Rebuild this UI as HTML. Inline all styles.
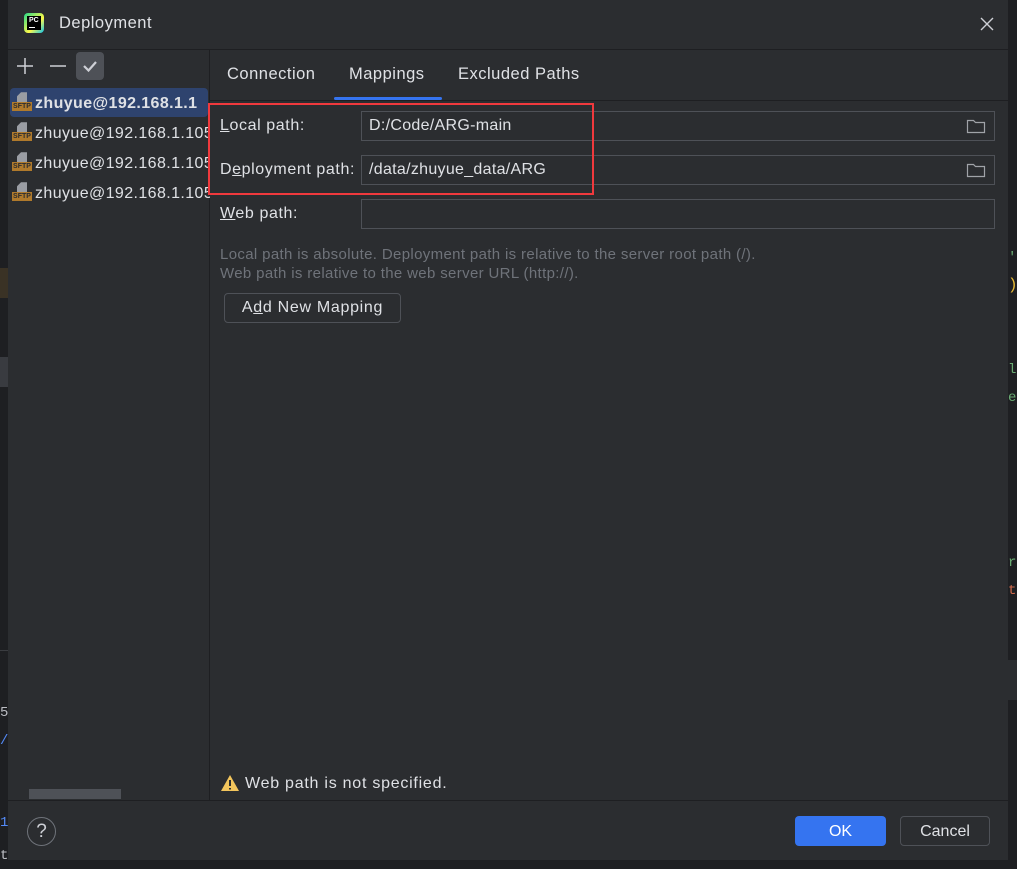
<!DOCTYPE html>
<html><head><meta charset="utf-8"><style>
*{box-sizing:border-box;margin:0;padding:0}
body{width:1017px;height:869px;background:#1e1f22;position:relative;overflow:hidden;font-family:"Liberation Sans",sans-serif;color:#dfe1e5;font-size:15px}
.abs{position:absolute}
#dlg{left:8px;top:0;width:1000px;height:860px;background:#2b2d30}
.u{text-decoration:underline}
.field{position:absolute;left:361px;width:634px;height:30px;border:1px solid #4e5157;background:#2b2d30;padding-left:7px;line-height:28px;font-size:16px;letter-spacing:0.3px}
.lbl{position:absolute;left:220px;font-size:16px;letter-spacing:0.6px}
.fold{position:absolute;right:8px;top:6px}
.item{position:absolute;left:10px;width:198px;height:28px;line-height:28px;font-size:16px;letter-spacing:0.4px;white-space:nowrap;overflow:hidden}
.sftp{display:inline-block;vertical-align:middle;width:20px;height:20px;position:relative;margin-right:3px;margin-top:-3px}
.tab{position:absolute;top:65px;font-size:16.5px;letter-spacing:0.5px}
</style></head><body>
<div class="abs" style="left:0;top:268px;width:8px;height:30px;background:#3a3225"></div>
<div class="abs" style="left:0;top:357px;width:8px;height:30px;background:#393b40"></div>
<div class="abs" style="left:0;top:650px;width:8px;height:1px;background:#3a3c40"></div>
<div class="abs" style="left:0;top:705px;font:14px 'Liberation Mono';color:#bcbec4">5</div>
<div class="abs" style="left:0;top:733px;font:14px 'Liberation Mono';color:#548af7">/</div>
<div class="abs" style="left:0;top:815px;font:14px 'Liberation Mono';color:#548af7">1</div>
<div class="abs" style="left:0;top:848px;font:14px 'Liberation Mono';color:#bcbec4">ta <span style="color:#2aacb8">0.00.00</span></div>
<div class="abs" style="left:1008px;top:250px;font:14px 'Liberation Mono';color:#6aab73">'</div>
<div class="abs" style="left:1008px;top:276px;font:16px 'Liberation Mono';color:#e8ba36">)</div>
<div class="abs" style="left:1008px;top:362px;font:14px 'Liberation Mono';color:#6aab73">l</div>
<div class="abs" style="left:1008px;top:390px;font:14px 'Liberation Mono';color:#6aab73">e</div>
<div class="abs" style="left:1008px;top:555px;font:14px 'Liberation Mono';color:#6aab73">r</div>
<div class="abs" style="left:1008px;top:583px;font:14px 'Liberation Mono';color:#cf6a4c">t</div>
<div class="abs" style="left:1008px;top:660px;width:9px;height:40px;background:#2b2d30"></div>

<div id="dlg" class="abs">
 <div class="abs" style="left:16px;top:13px;width:20px;height:20px;border-radius:4px;background:linear-gradient(135deg,#21d789,#fcf84a 60%,#07c3f2)"></div>
 <div class="abs" style="left:19px;top:16px;width:14px;height:14px;background:#000;color:#fff;font:bold 7px 'Liberation Sans';padding:1px 0 0 2px">PC<div style="width:6px;height:1px;background:#fff;margin-top:3px"></div></div>
 <div class="abs" style="left:51px;top:14px;font-size:16.5px;letter-spacing:0.5px">Deployment</div>
 <svg class="abs" style="left:972px;top:17px" width="14" height="14"><path d="M1 1L13 13M13 1L1 13" stroke="#ced0d6" stroke-width="1.4"/></svg>
 <div class="abs" style="left:0;top:49px;width:1000px;height:1px;background:#1e1f22"></div>
 <div class="abs" style="left:201px;top:50px;width:1px;height:750px;background:#1e1f22"></div>
 <svg class="abs" style="left:7px;top:56px" width="20" height="20"><path d="M10 2V18M2 10H18" stroke="#ced0d6" stroke-width="1.5"/></svg>
 <svg class="abs" style="left:40px;top:56px" width="20" height="20"><path d="M2 10H18" stroke="#ced0d6" stroke-width="1.5"/></svg>
 <div class="abs" style="left:68px;top:52px;width:28px;height:28px;border-radius:4px;background:#4e5157"></div>
 <svg class="abs" style="left:72px;top:56px" width="20" height="20"><path d="M4 10L8.5 14.5L16 6" stroke="#ced0d6" stroke-width="2.2" fill="none"/></svg>
 <div class="abs" style="left:2px;top:88px;width:198px;height:29px;border-radius:4px;background:#2e436e"></div>
 <div class="item" style="left:4px;top:90px;font-weight:bold"><span class="sftp"><span class="abs" style="left:5px;top:0;width:10px;height:10px;background:#9a9da3;clip-path:polygon(40% 0,100% 0,100% 100%,0 100%,0 40%)"></span><span class="abs" style="left:0;top:10px;width:20px;height:9px;background:#b07a2c;font:bold 7px 'Liberation Sans';color:#2b2d30;line-height:9px;text-align:center;letter-spacing:0">SFTP</span></span>zhuyue@192.168.1.1</div>
 <div class="item" style="left:4px;top:120px"><span class="sftp"><span class="abs" style="left:5px;top:0;width:10px;height:10px;background:#9a9da3;clip-path:polygon(40% 0,100% 0,100% 100%,0 100%,0 40%)"></span><span class="abs" style="left:0;top:10px;width:20px;height:9px;background:#b07a2c;font:bold 7px 'Liberation Sans';color:#2b2d30;line-height:9px;text-align:center;letter-spacing:0">SFTP</span></span>zhuyue@192.168.1.105</div>
 <div class="item" style="left:4px;top:150px"><span class="sftp"><span class="abs" style="left:5px;top:0;width:10px;height:10px;background:#9a9da3;clip-path:polygon(40% 0,100% 0,100% 100%,0 100%,0 40%)"></span><span class="abs" style="left:0;top:10px;width:20px;height:9px;background:#b07a2c;font:bold 7px 'Liberation Sans';color:#2b2d30;line-height:9px;text-align:center;letter-spacing:0">SFTP</span></span>zhuyue@192.168.1.105</div>
 <div class="item" style="left:4px;top:180px"><span class="sftp"><span class="abs" style="left:5px;top:0;width:10px;height:10px;background:#9a9da3;clip-path:polygon(40% 0,100% 0,100% 100%,0 100%,0 40%)"></span><span class="abs" style="left:0;top:10px;width:20px;height:9px;background:#b07a2c;font:bold 7px 'Liberation Sans';color:#2b2d30;line-height:9px;text-align:center;letter-spacing:0">SFTP</span></span>zhuyue@192.168.1.105</div>
 <div class="abs" style="left:21px;top:789px;width:92px;height:10px;background:#4e5157"></div>
 <div class="abs" style="left:0;top:800px;width:1000px;height:1px;background:#1e1f22"></div>
</div>
<div class="tab" style="left:227px">Connection</div>
<div class="tab" style="left:349px">Mappings</div>
<div class="tab" style="left:458px">Excluded Paths</div>
<div class="abs" style="left:334px;top:97px;width:108px;height:3px;border-radius:2px;background:#3574f0"></div>
<div class="abs" style="left:210px;top:100px;width:798px;height:1px;background:#1e1f22"></div>
<div class="lbl" style="top:117px"><span class="u">L</span>ocal path:</div>
<div class="field" style="top:111px">D:/Code/ARG-main<svg class="fold" width="20" height="16"><path d="M1.5 2.5H7.5L9.5 4.5H18.5V14.5H1.5Z" fill="none" stroke="#a0a3a8" stroke-width="1.2"/></svg></div>
<div class="lbl" style="top:161px">D<span class="u">e</span>ployment path:</div>
<div class="field" style="top:155px">/data/zhuyue_data/ARG<svg class="fold" width="20" height="16"><path d="M1.5 2.5H7.5L9.5 4.5H18.5V14.5H1.5Z" fill="none" stroke="#a0a3a8" stroke-width="1.2"/></svg></div>
<div class="lbl" style="top:205px"><span class="u">W</span>eb path:</div>
<div class="field" style="top:199px"></div>
<div class="abs" style="left:208px;top:103px;width:386px;height:92px;border:2px solid #f0393d"></div>
<div class="abs" style="left:220px;top:245px;font-size:15px;letter-spacing:0.35px;color:#6f737a;line-height:19px">Local path is absolute. Deployment path is relative to the server root path (/).<br>Web path is relative to the web server URL (http://).</div>
<div class="abs" style="left:224px;top:293px;width:177px;height:30px;border:1px solid #4e5157;border-radius:4px;text-align:center;line-height:28px;font-size:16px;letter-spacing:0.7px">A<span class="u">d</span>d New Mapping</div>
<svg class="abs" style="left:220px;top:774px" width="20" height="18"><path d="M10 1L19 17H1Z" fill="#f2c55c"/><path d="M10 6V12M10 14V15.5" stroke="#2b2d30" stroke-width="2"/></svg>
<div class="abs" style="left:245px;top:775px;font-size:16px;letter-spacing:0.75px">Web path is not specified.</div>
<div class="abs" style="left:27px;top:817px;width:29px;height:29px;border:1px solid #6f737a;border-radius:50%;text-align:center;line-height:27px;font-size:19px;color:#ced0d6">?</div>
<div class="abs" style="left:795px;top:816px;width:91px;height:30px;border-radius:4px;background:#3574f0;color:#fff;text-align:center;line-height:31px;font-size:16px">OK</div>
<div class="abs" style="left:900px;top:816px;width:90px;height:30px;border-radius:4px;border:1px solid #4e5157;text-align:center;line-height:30px;font-size:16px">Cancel</div>
</body></html>
